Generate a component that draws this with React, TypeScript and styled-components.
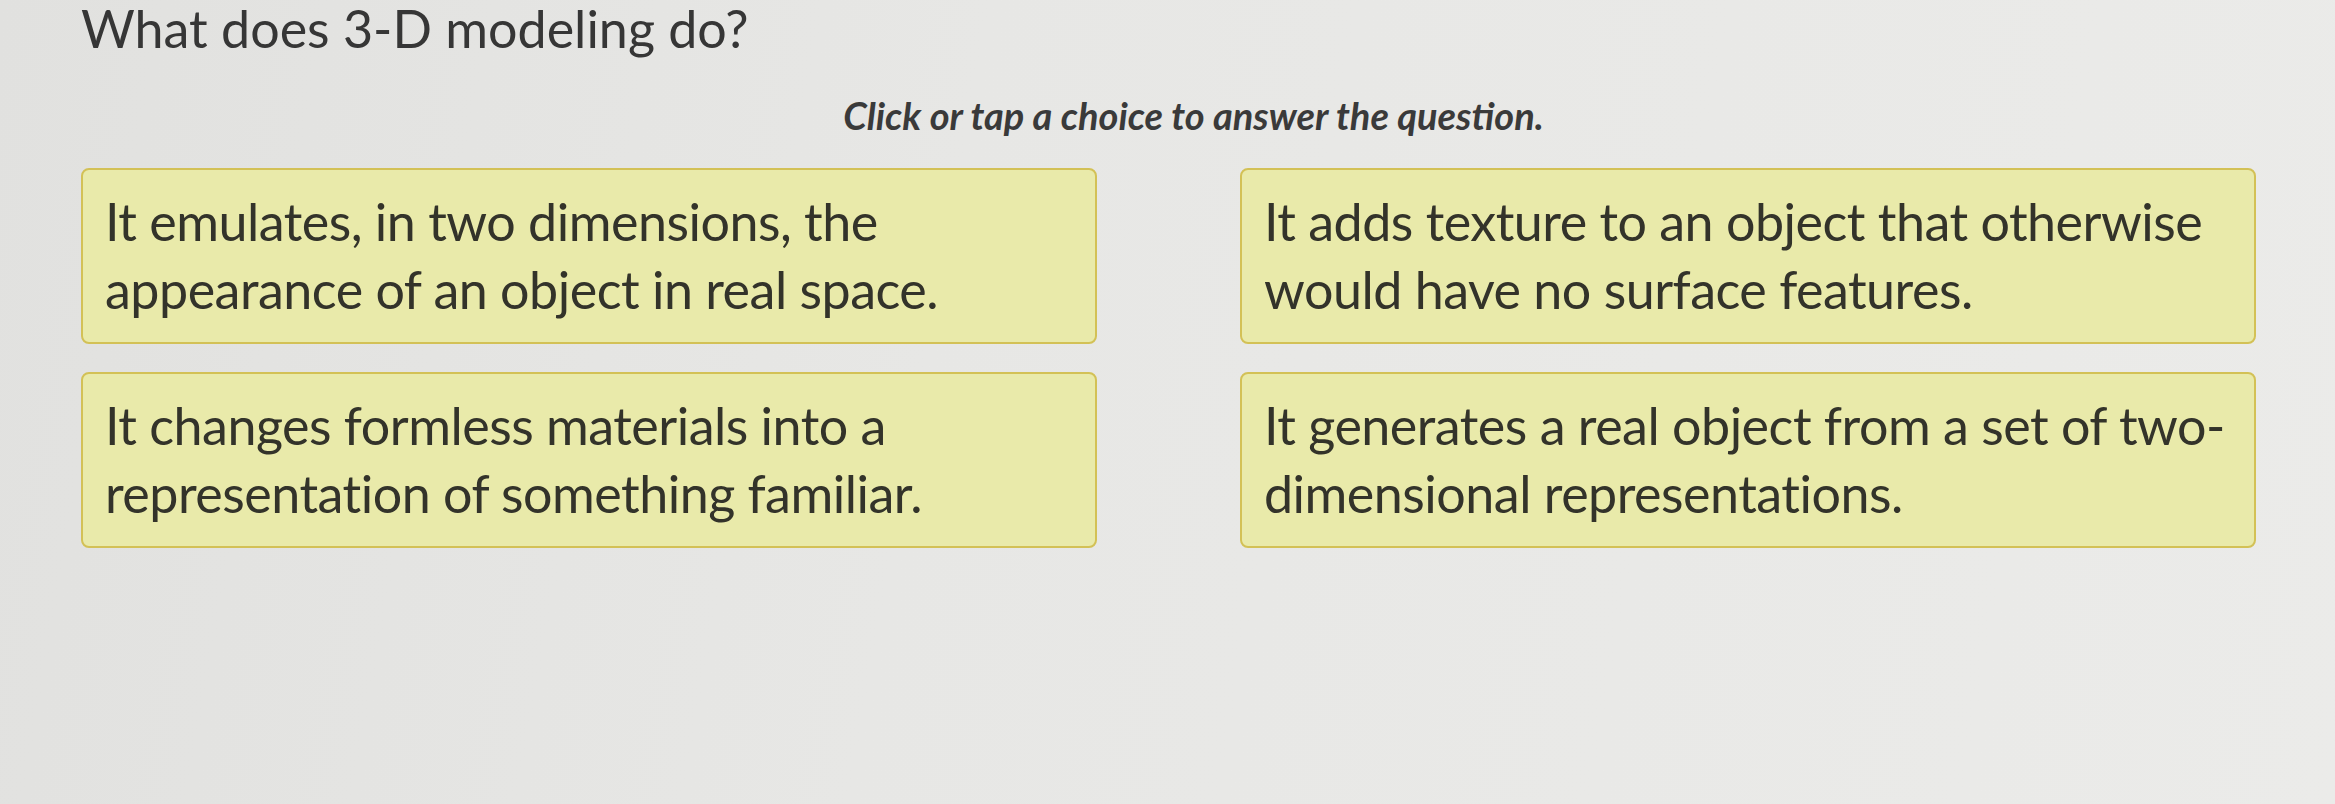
import styled, { createGlobalStyle } from "styled-components";

const GlobalStyle = createGlobalStyle`
  html, body {
    margin: 0;
    padding: 0;
    background: #e7e7e5;
  }
  body {
    font-family: Lato, "Noto Sans", sans-serif;
  }
`;

const Page = styled.main`
  box-sizing: border-box;
  width: 2335px;
  height: 804px;
  padding: 0 79px 0 81px;
  background: linear-gradient(100deg, #e1e1df 0%, #e7e7e5 40%, #ebebe9 100%);
  color: #3a3a3a;
`;

const Question = styled.h1`
  margin: 0;
  font-size: 52px;
  font-weight: 400;
  line-height: 56px;
  color: #363636;
`;

const Prompt = styled.p`
  margin: 37px 0 0;
  padding-left: 50px;
  text-align: center;
  font-size: 38px;
  font-weight: 700;
  font-style: italic;
  line-height: 44px;
  color: #3a3a3a;
`;

const Choices = styled.div`
  display: grid;
  grid-template-columns: 1fr 1fr;
  column-gap: 143px;
  row-gap: 28px;
  margin-top: 31px;
`;

const Choice = styled.div`
  box-sizing: border-box;
  min-height: 176px;
  padding: 17px 22px 19px;
  font-size: 52px;
  font-weight: 400;
  line-height: 68px;
  letter-spacing: -0.5px;
  color: #33332a;
  background: #e9eaaa;
  border: 2px solid #d3c156;
  border-radius: 8px;
  cursor: pointer;
`;

const choices = [
  "It emulates, in two dimensions, the appearance of an object in real space.",
  "It adds texture to an object that otherwise would have no surface features.",
  "It changes formless materials into a representation of something familiar.",
  "It generates a real object from a set of two-dimensional representations.",
];

function App() {
  return (
    <>
      <GlobalStyle />
      <Page>
        <Question>What does 3-D modeling do?</Question>
        <Prompt>Click or tap a choice to answer the question.</Prompt>
        <Choices>
          {choices.map((text) => (
            <Choice key={text} role="button">
              {text}
            </Choice>
          ))}
        </Choices>
      </Page>
    </>
  );
}

export default App;
